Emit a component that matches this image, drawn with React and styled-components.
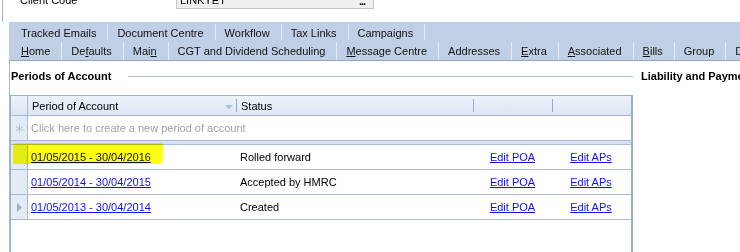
import styled, { createGlobalStyle } from "styled-components"

const GlobalStyle = createGlobalStyle`
  html, body { margin: 0; padding: 0; background: #fff; }
  body {
    font-family: "Liberation Sans", Arial, sans-serif;
    font-size: 11px;
    color: #000;
    overflow: hidden;
  }
`

const Page = styled.div`
  width: 740px;
  height: 252px;
  overflow: hidden;
  display: flex;
  flex-direction: column;
`

const TopBar = styled.div`
  height: 22px;
  margin-left: 2px;
  border-left: 1px solid #a4b2c4;
  overflow: hidden;
  flex-shrink: 0;
`

const ClientRow = styled.div`
  display: flex;
  align-items: flex-end;
  height: 10px;
  margin-top: -1px;
`

const ClientLabel = styled.span`
  width: 157px;
  padding-left: 17px;
  line-height: 13px;
  margin-bottom: 2px;
`

const ClientBox = styled.div`
  width: 198px;
  height: 20px;
  display: flex;
  align-items: center;
  border: 1px solid #c4c4c4;
  border-top: none;
  background: #efefef;
  padding-left: 3px;
  box-sizing: border-box;
  margin-top: -10px;
  margin-left: -1px;
`

const ClientValue = styled.span`
  flex: 1;
  padding-top: 2px;
`

const Ellipsis = styled.span`
  width: 14px;
  font-weight: bold;
  letter-spacing: -1px;
  padding-top: 4px;
`

const Workspace = styled.div`
  margin-left: 9px;
  flex: 1;
  display: flex;
  flex-direction: column;
  min-height: 0;
`

const TabStrip = styled.div`
  background: #bfd0e6;
  border-bottom: 1px solid #93a6c0;
  padding-left: 3px;
`

const TabRow = styled.div`
  display: flex;
  height: 19px;
  align-items: stretch;
  white-space: nowrap;
`

const Tab = styled.div`
  display: flex;
  align-items: center;
  padding: ${p => (p.$top ? "2px 11px 0 9px" : "0 11px 0 9px")};
  border-right: 1px solid #e4eaf3;
  margin: ${p => (p.$top ? "2px 0 1px" : "1px 0 0")};
  color: #111;
  &:first-child { padding-left: 9px; }
  &:last-child { border-right: ${p => (p.$top ? "1px solid #e4eaf3" : "none")}; }
`

const Key = styled.span`
  text-decoration: underline;
`

const Panel = styled.div`
  flex: 1;
  display: flex;
  flex-direction: column;
  border-left: 1px solid #a9b7c8;
  min-height: 0;
`

const SectionRow = styled.div`
  height: 30px;
  padding-bottom: 4px;
  display: flex;
  align-items: center;
  white-space: nowrap;
`

const SectionTitle = styled.span`
  font-weight: bold;
  flex-shrink: 0;
  width: ${p => (p.$w ? `${p.$w}px` : "auto")};
  padding-left: ${p => p.$pad || 0}px;
`

const SectionRule = styled.div`
  width: 505px;
  flex-shrink: 0;
  height: 1px;
  background: #a9bcd6;
  margin: 0 8px 0 0;
`

const Grid = styled.div`
  width: 623px;
  flex: 1;
  box-sizing: border-box;
  border: 1px solid #9db0c9;
  border-right: 2px solid #9cafc8;
  border-bottom: none;
`

const Row = styled.div`
  display: grid;
  grid-template-columns: 17px 209px 237px 79px 78px;
  height: ${p => p.$h}px;
  border-bottom: 1px solid #a8bbd4;
  position: relative;
`

const HeaderRow = styled(Row)`
  background: linear-gradient(#eef3fa, #dbe6f4);
`

const HeaderCell = styled.div`
  position: relative;
  display: flex;
  align-items: center;
  padding-left: 4px;
  white-space: nowrap;
  &::after {
    content: "";
    display: ${p => (p.$sep ? "block" : "none")};
    position: absolute;
    right: 0;
    top: 3px;
    bottom: 3px;
    width: 1px;
    background: #9aaac0;
  }
`

const Corner = styled.div`
  border-right: 1px solid #a8bbd4;
`

const SortArrow = styled.span`
  position: absolute;
  right: 4px;
  top: 9px;
  width: 0;
  height: 0;
  border-left: 4px solid transparent;
  border-right: 4px solid transparent;
  border-top: 4px solid #a4bfdf;
`

const RowHead = styled.div`
  background: #e4ebf4;
  border-right: 1px solid #a8bbd4;
  display: flex;
  align-items: center;
  justify-content: center;
  padding-left: 1px;
`

const NewRowText = styled.div`
  grid-column: 2 / -1;
  display: flex;
  align-items: center;
  padding-left: 3px;
  color: #a2a2a2;
`

const Band = styled.div`
  height: 3px;
  background: #d7e3f2;
  border-bottom: 1px solid #a8bbd4;
`

const Cell = styled.div`
  display: flex;
  align-items: center;
  justify-content: ${p => (p.$center ? "center" : "flex-start")};
  padding-left: ${p => (p.$center ? 0 : 3)}px;
  padding-right: ${p => (p.$center ? 2 : 0)}px;
  padding-bottom: 1px;
  white-space: nowrap;
`

const Link = styled.span`
  color: #1010ff;
  text-decoration: underline;
`

const Highlight = styled.div`
  position: absolute;
  left: 2px;
  top: -2px;
  width: 150px;
  height: 21px;
  background: #ffff14;
  border-radius: 4px 2px 4px 1px;
  mix-blend-mode: multiply;
  pointer-events: none;
`

const Star = () => (
  <svg width="9" height="9" viewBox="0 0 9 9">
    <g stroke="#b3bfcd" strokeWidth="1">
      <line x1="4.5" y1="0.5" x2="4.5" y2="8.5" />
      <line x1="1" y1="2.5" x2="8" y2="6.5" />
      <line x1="1" y1="6.5" x2="8" y2="2.5" />
    </g>
  </svg>
)

const Pointer = () => (
  <svg width="5" height="9" viewBox="0 0 5 9">
    <path d="M0 0 L5 4.5 L0 9 Z" fill="#a7afbb" />
  </svg>
)

const periods = [
  { range: "01/05/2015 - 30/04/2016", status: "Rolled forward", marked: true },
  { range: "01/05/2014 - 30/04/2015", status: "Accepted by HMRC" },
  { range: "01/05/2013 - 30/04/2014", status: "Created", current: true },
]

const App = () => {
  return (
    <Page>
      <GlobalStyle />
      <TopBar>
        <ClientRow>
          <ClientLabel>Client Code</ClientLabel>
          <ClientBox>
            <ClientValue>LINKYET</ClientValue>
            <Ellipsis>...</Ellipsis>
          </ClientBox>
        </ClientRow>
      </TopBar>
      <Workspace>
        <TabStrip>
          <TabRow>
            <Tab $top>Tracked Emails</Tab>
            <Tab $top>Document Centre</Tab>
            <Tab $top>Workflow</Tab>
            <Tab $top>Tax Links</Tab>
            <Tab $top>Campaigns</Tab>
          </TabRow>
          <TabRow>
            <Tab><span><Key>H</Key>ome</span></Tab>
            <Tab><span>De<Key>f</Key>aults</span></Tab>
            <Tab><span>Mai<Key>n</Key></span></Tab>
            <Tab>CGT and Dividend Scheduling</Tab>
            <Tab><span><Key>M</Key>essage Centre</span></Tab>
            <Tab>Addresses</Tab>
            <Tab><span><Key>E</Key>xtra</span></Tab>
            <Tab><span><Key>A</Key>ssociated</span></Tab>
            <Tab><span><Key>B</Key>ills</span></Tab>
            <Tab>Group</Tab>
            <Tab>D</Tab>
          </TabRow>
        </TabStrip>
        <Panel>
          <SectionRow>
            <SectionTitle $pad={1} $w={117}>Periods of Account</SectionTitle>
            <SectionRule />
            <SectionTitle>Liability and Payments</SectionTitle>
          </SectionRow>
          <Grid>
            <HeaderRow $h={19}>
              <Corner />
              <HeaderCell $sep>
                Period of Account
                <SortArrow />
              </HeaderCell>
              <HeaderCell $sep>Status</HeaderCell>
              <HeaderCell $sep />
              <HeaderCell />
            </HeaderRow>
            <Row $h={24}>
              <RowHead><Star /></RowHead>
              <NewRowText>Click here to create a new period of account</NewRowText>
            </Row>
            <Band />
            {periods.map(p => (
              <Row $h={24} key={p.range}>
                <RowHead>{p.current && <Pointer />}</RowHead>
                <Cell><Link>{p.range}</Link></Cell>
                <Cell>{p.status}</Cell>
                <Cell $center><Link>Edit POA</Link></Cell>
                <Cell $center><Link>Edit APs</Link></Cell>
                {p.marked && <Highlight />}
              </Row>
            ))}
          </Grid>
        </Panel>
      </Workspace>
    </Page>
  )
}

export default App
